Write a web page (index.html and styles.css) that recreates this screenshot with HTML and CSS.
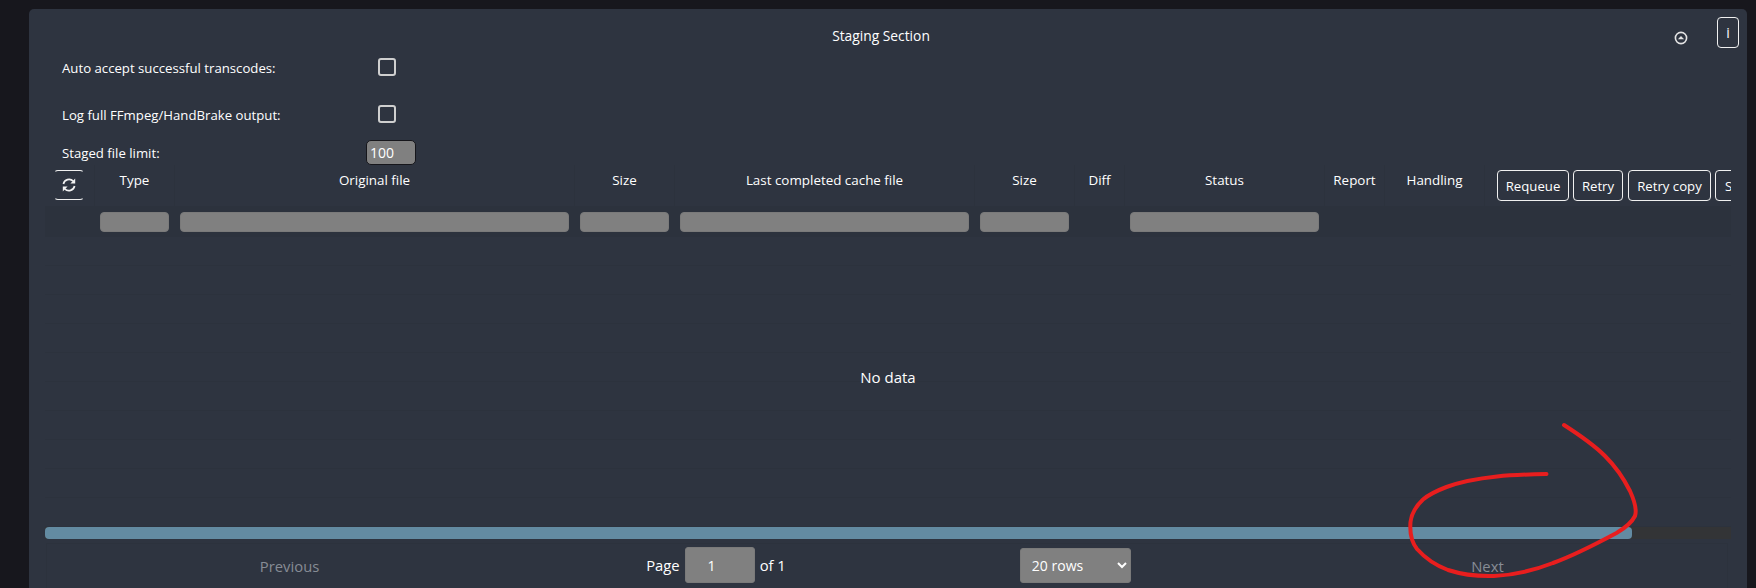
FILE: index.html
```html
<!DOCTYPE html>
<html lang="en">

<head>
    <meta charset="UTF-8">
    <meta name="viewport" content="width=device-width, initial-scale=1.0">
    <title>Staging Section</title>
    <link rel="stylesheet" href="styles.css">
</head>

<body>
    <div class="panel">
        <div class="panel-title">Staging Section</div>
        <svg class="collapse-icon" viewBox="0 0 14 14" width="14" height="14">
            <circle cx="7" cy="7" r="5.6" fill="none" stroke="#e4e4e4" stroke-width="1.6"></circle>
            <path d="M3.9 8.3 L7 5 L10.1 8.3 Z" fill="#e4e4e4"></path>
        </svg>
        <button class="info-btn">i</button>

        <div class="setting setting-first">
            <label>Auto accept successful transcodes:</label>
            <input type="checkbox" class="check">
        </div>
        <div class="setting setting-second">
            <label>Log full FFmpeg/HandBrake output:</label>
            <input type="checkbox" class="check">
        </div>
        <div class="setting setting-limit">
            <label>Staged file limit:</label>
            <input type="text" class="limit-input" value="100">
        </div>

        <div class="table">
            <div class="table-head">
                <div class="cell cell-refresh">
                    <button class="refresh-btn">
                        <svg viewBox="0 0 16 16" width="16" height="16">
                            <path fill="none" stroke="#f2f2f2" stroke-width="1.7" d="M2.4 7 A5.8 5.8 0 0 1 12.2 4.2"></path>
                            <path fill="#f2f2f2" d="M14.2 1.6 V6.4 H9.4 Z"></path>
                            <path fill="none" stroke="#f2f2f2" stroke-width="1.7" d="M13.6 9 A5.8 5.8 0 0 1 3.8 11.8"></path>
                            <path fill="#f2f2f2" d="M1.8 14.4 V9.6 H6.6 Z"></path>
                        </svg>
                    </button>
                </div>
                <div class="cell">Type</div>
                <div class="cell">Original file</div>
                <div class="cell">Size</div>
                <div class="cell">Last completed cache file</div>
                <div class="cell">Size</div>
                <div class="cell">Diff</div>
                <div class="cell">Status</div>
                <div class="cell">Report</div>
                <div class="cell">Handling</div>
                <div class="cell-actions">
                    <button class="action-btn btn-requeue">Requeue</button>
                    <button class="action-btn btn-retry">Retry</button>
                    <button class="action-btn btn-copy">Retry copy</button>
                    <button class="action-btn btn-cut">S</button>
                </div>
            </div>

            <div class="table-filters">
                <div class="filter"></div>
                <div class="filter"><input type="text" class="filter-input"></div>
                <div class="filter"><input type="text" class="filter-input"></div>
                <div class="filter"><input type="text" class="filter-input"></div>
                <div class="filter"><input type="text" class="filter-input"></div>
                <div class="filter"><input type="text" class="filter-input"></div>
                <div class="filter"></div>
                <div class="filter"><input type="text" class="filter-input"></div>
                <div class="filter"></div>
                <div class="filter"></div>
                <div class="filter"></div>
            </div>

            <div class="table-body">
                <div class="row"></div>
                <div class="row"></div>
                <div class="row"></div>
                <div class="row"></div>
                <div class="row"></div>
                <div class="row"></div>
                <div class="row"></div>
                <div class="row"></div>
                <div class="row"></div>
                <div class="row"></div>
                <div class="no-data">No data</div>
            </div>

            <div class="scroll-track">
                <div class="scroll-thumb"></div>
            </div>

            <div class="pagination">
                <div class="page-side page-prev">Previous</div>
                <div class="page-center">
                    <div class="page-info">
                        Page
                        <input type="text" class="page-input" value="1">
                        of 1
                    </div>
                    <select class="page-size">
                        <option>20 rows</option>
                    </select>
                </div>
                <div class="page-side">Next</div>
            </div>
        </div>
    </div>

    <!-- hand drawn red circle on top of the screenshot -->
    <svg class="scribble" viewBox="0 0 1756 588" width="1756" height="588">
        <path fill="none" stroke="#e81e1e" stroke-width="4" stroke-linecap="round" stroke-linejoin="round"
            d="M1546.5 474 C1530 474.3 1513 474.7 1497 476.5 C1478 478.5 1460 482 1446.5 487 C1436 491 1429 494.5 1423 499.5 C1416 506 1411.5 514 1410.5 522 C1409.5 534 1411.5 542 1417 549 C1425 558 1436 565.5 1448 570 C1462 574.5 1478 576.5 1494 576 C1515 575 1535 570 1553 563 C1575 555 1596 544 1616.5 533 C1625 528 1632 522 1635 516 C1637 510 1635 502 1630 491 C1624 479 1616 467 1605 456 C1592 443 1578 434 1564 425"></path>
    </svg>
</body>

</html>
```

FILE: styles.css
```css
* {
    margin: 0;
    padding: 0;
    box-sizing: border-box;
}

html,
body {
    height: 588px;
    overflow: hidden;
}

body {
    position: relative;
    background-color: #17171d;
    color: #fff;
    font-family: "Open Sans", "Noto Sans", sans-serif;
    font-size: 13.2px;
    padding: 9px 9px 0 29px;
}

button,
input,
select {
    font-family: inherit;
    color: #fff;
}

/* main panel */

.panel {
    position: relative;
    height: 600px;
    background-color: #2e3440;
    border-radius: 5px 5px 0 0;
}

.panel-title {
    height: 39px;
    padding: 17px 14px 0 0;
    font-size: 13.8px;
    line-height: 20px;
    text-align: center;
}

.collapse-icon {
    position: absolute;
    top: 22px;
    left: 1645px;
}

.info-btn {
    position: absolute;
    top: 8px;
    left: 1688px;
    width: 22px;
    height: 31px;
    background: transparent;
    border: 1px solid #f0f0f0;
    border-radius: 4px;
    font-size: 14px;
}

/* settings */

.setting {
    display: flex;
    align-items: center;
    padding-left: 33px;
}

.setting label {
    width: 316px;
}

.setting-first {
    height: 39px;
}

.setting-second {
    height: 39px;
    margin-top: 8px;
}

.setting-limit {
    height: 25px;
    margin-top: 6px;
}

.setting-limit label {
    width: 304px;
}

.check {
    appearance: none;
    width: 18px;
    height: 18px;
    margin-top: -2px;
    background: transparent;
    border: 2px solid #cfcfcf;
    border-radius: 3px;
}

.limit-input {
    width: 50px;
    height: 25px;
    padding-left: 3px;
    background-color: #808080;
    border: 1px solid #16161b;
    border-radius: 5px;
    font-size: 14px;
}

/* table */

.table {
    width: 1686px;
    margin-left: 16px;
    overflow: hidden;
}

.table-head,
.table-filters {
    display: grid;
    grid-template-columns: 50px 80px 400px 100px 300px 100px 50px 200px 60px 100px 246px;
}

.table-head {
    height: 41px;
}

.cell {
    padding-top: 5px;
    font-size: 13.4px;
    line-height: 20px;
    text-align: center;
    border-right: 1px solid #2c323d;
}

.cell-refresh {
    padding: 5px 0 0 9px;
    text-align: left;
}

.refresh-btn {
    display: flex;
    align-items: center;
    justify-content: center;
    width: 30px;
    height: 30px;
    background: transparent;
    border: 1px solid #f0f0f0;
    border-left-color: transparent;
    border-right-color: transparent;
    border-radius: 4px;
}

.cell-actions {
    display: flex;
    gap: 4px;
    padding: 5px 0 0 12px;
}

.action-btn {
    flex: none;
    height: 31px;
    background: transparent;
    border: 1px solid #f0f0f0;
    border-radius: 4px;
    font-size: 13.2px;
}

.btn-requeue {
    width: 72px;
}

.btn-retry {
    width: 50px;
}

.btn-copy {
    width: 83px;
    margin-left: 1px;
}

.btn-cut {
    width: 40px;
    padding-left: 9px;
    text-align: left;
}

.table-filters {
    height: 31px;
    background-color: #2c323d;
    border-bottom: 1px solid #2c323d;
}

.filter {
    padding: 6px 6px 6px 5px;
}

.filter-input {
    display: block;
    width: 100%;
    height: 20px;
    background-color: #808080;
    border: 1px solid #7a7a7a;
    border-radius: 4px;
}

.table-body {
    position: relative;
}

.row {
    height: 29px;
    border-bottom: 1px solid #2c323d;
}

.no-data {
    position: absolute;
    top: 129px;
    left: 0;
    width: 100%;
    font-size: 15px;
    line-height: 22px;
    text-align: center;
}

.scroll-track {
    height: 12px;
    background-color: #333436;
}

.scroll-thumb {
    width: 1587px;
    height: 12px;
    background-color: #638ba2;
    border-radius: 4px;
}

/* pagination */

.pagination {
    display: flex;
    height: 60px;
    margin: 4px 3px 0 1px;
    border: 1px solid #2c323d;
}

.page-side {
    flex: 1;
    padding-top: 10px;
    line-height: 24px;
    font-size: 14.8px;
    text-align: center;
    color: #878c95;
}

.page-prev {
    padding-left: 3px;
}

.page-center {
    flex: 1.5;
    display: flex;
    justify-content: space-around;
    align-items: flex-start;
    padding: 3px 0 0 0;
}

.page-info {
    display: flex;
    align-items: center;
    gap: 5px;
    font-size: 14.8px;
}

.page-input {
    width: 70px;
    height: 36px;
    padding-right: 16px;
    background-color: #808080;
    border: 1px solid #7a7a7a;
    border-radius: 3px;
    font-size: 14px;
    text-align: center;
}

.page-size {
    width: 111px;
    height: 35px;
    margin-top: 1px;
    padding-left: 7px;
    background-color: #808080;
    border: 1px solid #7a7a7a;
    border-radius: 3px;
    font-size: 14px;
}

/* annotation */

.scribble {
    position: absolute;
    top: 0;
    left: 0;
    pointer-events: none;
}
```
